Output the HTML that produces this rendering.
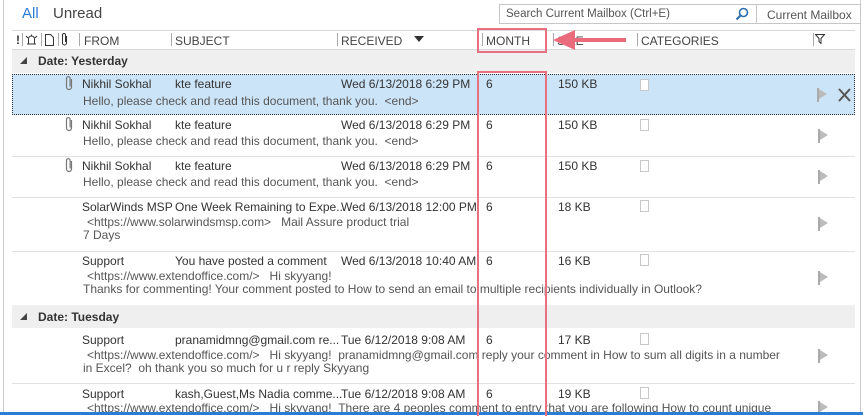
<!DOCTYPE html>
<html style="overflow:hidden;height:416px"><head><meta charset="utf-8"><style>
body{margin:0;width:863px;height:416px;background:#fff;position:relative;overflow:hidden;font-family:"Liberation Sans",sans-serif;font-size:12px;color:#333}
.a{position:absolute;white-space:nowrap}
.g{color:#555}
.sep{position:absolute;left:12px;width:843px;height:1px;background:#e1e1e1}
.hdr{position:absolute;left:12px;width:843px;height:23px;background:#efefef;font-weight:bold;color:#333}
.cb{position:absolute;width:7px;height:10px;border:1px solid #c8c8c8;background:#fff}
.flag{position:absolute;width:12px;height:14px}
.cs{position:absolute;top:33px;width:1px;height:13px;background:#aaa}
</style></head><body>
<div class="a" style="left:3px;top:0;width:1px;height:416px;background:#ccc"></div>
<div class="a" style="left:860px;top:0;width:1px;height:416px;background:#ccc"></div>
<div class="a" style="left:22px;top:5px;font-size:15px;color:#2b7cd3">All</div>
<div class="a" style="left:53px;top:5px;font-size:15px;color:#444">Unread</div>
<div class="a" style="left:499px;top:4px;width:258px;height:20px;border:1px solid #c6c6c6;box-sizing:border-box"></div>
<div class="a" style="left:506px;top:8px;font-size:11.5px;color:#555">Search Current Mailbox (Ctrl+E)</div>
<svg class="a" style="left:735px;top:7px" width="14" height="14"><circle cx="8.5" cy="5.5" r="4" fill="none" stroke="#2b6cb0" stroke-width="1.6"/><line x1="5.5" y1="8.5" x2="1.5" y2="12.5" stroke="#2b6cb0" stroke-width="2"/></svg>
<div class="a" style="left:756px;top:4px;width:105px;height:20px;border:1px solid #c6c6c6;box-sizing:border-box"></div>
<div class="a" style="left:767px;top:8px;color:#555">Current Mailbox</div>
<div class="a" style="left:12px;top:30px;width:843px;height:1px;background:#d8d8d8"></div>
<div class="a" style="left:12px;top:49px;width:843px;height:1px;background:#d8d8d8"></div>
<div class="a" style="left:16px;top:33px;font-weight:bold">!</div>
<div class="cs" style="left:22px"></div>
<svg class="a" style="left:25px;top:34px" width="13" height="12"><path d="M2 10h9M3.5 10v-5a3 3 0 0 1 6 0v5M6.5 2v-1.5M1 2l2 2M12 2l-2 2" fill="none" stroke="#333"/></svg>
<div class="cs" style="left:41px"></div>
<svg class="a" style="left:45px;top:34px" width="9" height="12"><path d="M0.5 0.5h5l3 3v8h-8z" fill="none" stroke="#333"/></svg>
<div class="cs" style="left:58px"></div>
<svg class="a" style="left:61px;top:33px" width="8" height="13"><path d="M5.5 3v7a2 2 0 0 1-4 0v-8a1.5 1.5 0 0 1 3 0v7" fill="none" stroke="#333"/></svg>
<div class="cs" style="left:79px"></div>
<div class="a" style="left:84px;top:34px;color:#444">FROM</div>
<div class="cs" style="left:171px"></div>
<div class="a" style="left:175px;top:34px;color:#444">SUBJECT</div>
<div class="cs" style="left:337px"></div>
<div class="a" style="left:341px;top:34px;color:#444">RECEIVED</div>
<svg class="a" style="left:414px;top:36px" width="10" height="6"><path d="M0 0h10l-5 6z" fill="#333"/></svg>
<div class="cs" style="left:482px"></div>
<div class="a" style="left:486px;top:34px;color:#444">MONTH</div>
<div class="cs" style="left:553px"></div>
<div class="a" style="left:557px;top:34px;color:#444">SIZE</div>
<div class="cs" style="left:637px"></div>
<div class="a" style="left:641px;top:34px;color:#444">CATEGORIES</div>
<div class="cs" style="left:813px"></div>
<svg class="a" style="left:815px;top:34px" width="10" height="10"><path d="M0.5 0.5h9l-3.5 4v5l-2-2v-3z" fill="none" stroke="#333"/></svg>

<div class="hdr" style="top:50px"></div>
<svg class="a" style="left:20px;top:57px" width="7" height="7"><path d="M7 0v7h-7z" fill="#444"/></svg>
<div class="a" style="left:38px;top:54px;font-weight:bold">Date: Yesterday</div>

<div class="a" style="left:12px;top:74px;width:843px;height:41px;background:#cce4f7;border:1px dotted #333;box-sizing:border-box"></div>

<div class="sep" style="top:156px"></div>
<div class="sep" style="top:197px"></div>
<div class="sep" style="top:251px"></div>
<div class="hdr" style="top:305px"></div>
<svg class="a" style="left:20px;top:313px" width="7" height="7"><path d="M7 0v7h-7z" fill="#444"/></svg>
<div class="a" style="left:38px;top:310px;font-weight:bold">Date: Tuesday</div>
<div class="sep" style="top:383px"></div>

<!-- row1 -->
<svg class="a" style="left:65px;top:76px" width="9" height="15"><path d="M6.5 3v8a2.5 2.5 0 0 1-5 0v-8.5a1.8 1.8 0 0 1 3.6 0v8" fill="none" stroke="#777" stroke-width="1.2"/></svg>
<div class="a" style="left:82px;top:77px">Nikhil Sokhal</div><div class="a" style="left:175px;top:77px">kte feature</div><div class="a" style="left:341px;top:77px">Wed 6/13/2018 6:29 PM</div><div class="a" style="left:486px;top:77px">6</div><div class="a" style="left:558px;top:77px">150 KB</div>
<div class="cb" style="left:640px;top:79px"></div>
<div class="a g" style="left:83px;top:94px">Hello, please check and read this document, thank you. &nbsp;&lt;end&gt;</div>
<svg class="a" style="left:817px;top:88px" width="34" height="14"><path d="M1 0v14" stroke="#aaa" stroke-width="2"/><path d="M2 1l8 5-8 5z" fill="#bbb"/><path d="M22 1l11 12M33 1l-11 12" stroke="#555" stroke-width="2"/></svg>

<!-- row2 -->
<svg class="a" style="left:65px;top:117px" width="9" height="15"><path d="M6.5 3v8a2.5 2.5 0 0 1-5 0v-8.5a1.8 1.8 0 0 1 3.6 0v8" fill="none" stroke="#777" stroke-width="1.2"/></svg>
<div class="a" style="left:82px;top:118px">Nikhil Sokhal</div><div class="a" style="left:175px;top:118px">kte feature</div><div class="a" style="left:341px;top:118px">Wed 6/13/2018 6:29 PM</div><div class="a" style="left:486px;top:118px">6</div><div class="a" style="left:558px;top:118px">150 KB</div>
<div class="cb" style="left:640px;top:119px"></div>
<div class="a g" style="left:83px;top:134px">Hello, please check and read this document, thank you. &nbsp;&lt;end&gt;</div>
<svg class="flag" style="left:818px;top:129px"><path d="M1 0v14" stroke="#aaa" stroke-width="2"/><path d="M2 1l8 5-8 5z" fill="#bbb"/></svg>

<!-- row3 -->
<svg class="a" style="left:65px;top:158px" width="9" height="15"><path d="M6.5 3v8a2.5 2.5 0 0 1-5 0v-8.5a1.8 1.8 0 0 1 3.6 0v8" fill="none" stroke="#777" stroke-width="1.2"/></svg>
<div class="a" style="left:82px;top:159px">Nikhil Sokhal</div><div class="a" style="left:175px;top:159px">kte feature</div><div class="a" style="left:341px;top:159px">Wed 6/13/2018 6:29 PM</div><div class="a" style="left:486px;top:159px">6</div><div class="a" style="left:558px;top:159px">150 KB</div>
<div class="cb" style="left:640px;top:160px"></div>
<div class="a g" style="left:83px;top:175px">Hello, please check and read this document, thank you. &nbsp;&lt;end&gt;</div>
<svg class="flag" style="left:818px;top:170px"><path d="M1 0v14" stroke="#aaa" stroke-width="2"/><path d="M2 1l8 5-8 5z" fill="#bbb"/></svg>

<!-- row4 -->
<div class="a" style="left:82px;top:200px">SolarWinds MSP</div><div class="a" style="left:175px;top:200px">One Week Remaining to Expe...</div><div class="a" style="left:341px;top:200px">Wed 6/13/2018 12:00 PM</div><div class="a" style="left:486px;top:200px">6</div><div class="a" style="left:558px;top:200px">18 KB</div>
<div class="cb" style="left:640px;top:200px"></div>
<div class="a g" style="left:87px;top:215px">&lt;https://www.solarwindsmsp.com&gt; &nbsp;&nbsp;Mail Assure product trial</div>
<div class="a g" style="left:83px;top:228px">7 Days</div>
<svg class="flag" style="left:818px;top:217px"><path d="M1 0v14" stroke="#aaa" stroke-width="2"/><path d="M2 1l8 5-8 5z" fill="#bbb"/></svg>

<!-- row5 -->
<div class="a" style="left:82px;top:254px">Support</div><div class="a" style="left:175px;top:254px">You have posted a comment</div><div class="a" style="left:341px;top:254px">Wed 6/13/2018 10:40 AM</div><div class="a" style="left:486px;top:254px">6</div><div class="a" style="left:558px;top:254px">16 KB</div>
<div class="cb" style="left:640px;top:254px"></div>
<div class="a g" style="left:87px;top:269px">&lt;https://www.extendoffice.com/&gt; &nbsp;&nbsp;Hi skyyang!</div>
<div class="a g" style="left:83px;top:282px">Thanks for commenting! Your comment posted to How to send an email to multiple recipients individually in Outlook?</div>
<svg class="flag" style="left:818px;top:271px"><path d="M1 0v14" stroke="#aaa" stroke-width="2"/><path d="M2 1l8 5-8 5z" fill="#bbb"/></svg>

<!-- row6 -->
<div class="a" style="left:82px;top:333px">Support</div><div class="a" style="left:175px;top:333px">pranamidmng@gmail.com re...</div><div class="a" style="left:341px;top:333px">Tue 6/12/2018 9:08 AM</div><div class="a" style="left:486px;top:333px">6</div><div class="a" style="left:558px;top:333px">17 KB</div>
<div class="cb" style="left:640px;top:333px"></div>
<div class="a g" style="left:87px;top:348px">&lt;https://www.extendoffice.com/&gt; &nbsp;&nbsp;Hi skyyang! &nbsp;pranamidmng@gmail.com reply your comment in How to sum all digits in a number</div>
<div class="a g" style="left:83px;top:361px">in Excel? &nbsp;oh thank you so much for u r reply Skyyang</div>
<svg class="flag" style="left:818px;top:349px"><path d="M1 0v14" stroke="#aaa" stroke-width="2"/><path d="M2 1l8 5-8 5z" fill="#bbb"/></svg>

<!-- row7 -->
<div class="a" style="left:82px;top:387px">Support</div><div class="a" style="left:175px;top:387px">kash,Guest,Ms Nadia comme...</div><div class="a" style="left:341px;top:387px">Tue 6/12/2018 9:08 AM</div><div class="a" style="left:486px;top:387px">6</div><div class="a" style="left:558px;top:387px">19 KB</div>
<div class="cb" style="left:640px;top:387px"></div>
<div class="a g" style="left:87px;top:401px">&lt;https://www.extendoffice.com/&gt; &nbsp;&nbsp;Hi skyyang! &nbsp;There are 4 peoples comment to entry that you are following How to count unique</div>
<svg class="flag" style="left:818px;top:401px"><path d="M1 0v14" stroke="#aaa" stroke-width="2"/><path d="M2 1l8 5-8 5z" fill="#bbb"/></svg>

<div class="a" style="left:0;top:412px;width:863px;height:4px;background:#fff"></div>
<div class="a" style="left:0;top:412px;width:863px;height:3px;background:#2b7cd3"></div>

<div class="a" style="left:477px;top:28px;width:70px;height:25px;border:2px solid #e8707f;box-sizing:border-box"></div>
<div class="a" style="left:477px;top:71px;width:70px;height:345px;border:2px solid #e8707f;border-bottom:none;box-sizing:border-box"></div>
<svg class="a" style="left:553px;top:29px" width="74" height="22"><path d="M18 11h55" stroke="#ea6b7b" stroke-width="4"/><path d="M0 11l22-10v20z" fill="#ea6b7b"/></svg>
</body></html>
